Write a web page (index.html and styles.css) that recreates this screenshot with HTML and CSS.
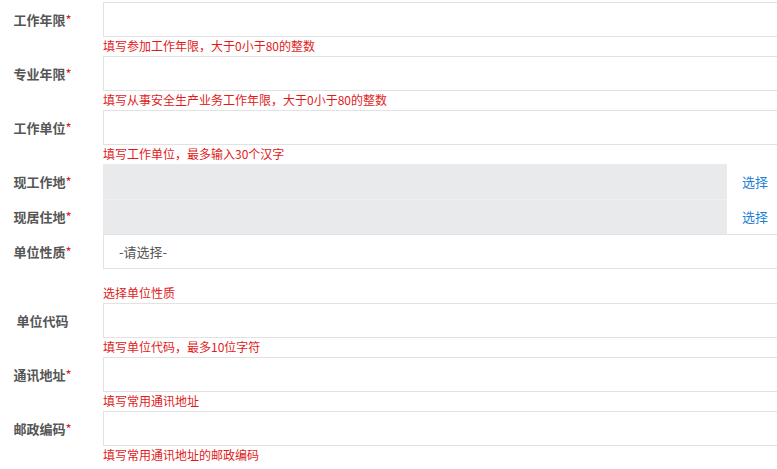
FILE: index.html
```html
<!DOCTYPE html>
<html lang="zh-CN">
<head>
<meta charset="utf-8">
<title>表单</title>
<link rel="stylesheet" href="styles.css">
</head>
<body>
<div class="form">
  <div class="row">
    <div class="label">工作年限<span class="req">*</span></div>
    <div class="field">
      <div class="input"></div>
      <div class="hint">填写参加工作年限，大于0小于80的整数</div>
    </div>
  </div>
  <div class="row">
    <div class="label">专业年限<span class="req">*</span></div>
    <div class="field">
      <div class="input"></div>
      <div class="hint">填写从事安全生产业务工作年限，大于0小于80的整数</div>
    </div>
  </div>
  <div class="row">
    <div class="label">工作单位<span class="req">*</span></div>
    <div class="field">
      <div class="input"></div>
      <div class="hint">填写工作单位，最多输入30个汉字</div>
    </div>
  </div>
  <div class="row">
    <div class="label">现工作地<span class="req">*</span></div>
    <div class="field pick">
      <div class="readonly"></div>
      <a class="choose">选择</a>
    </div>
  </div>
  <div class="row">
    <div class="label">现居住地<span class="req">*</span></div>
    <div class="field pick">
      <div class="readonly second"></div>
      <a class="choose">选择</a>
    </div>
  </div>
  <div class="row">
    <div class="label">单位性质<span class="req">*</span></div>
    <div class="field">
      <div class="input select">-请选择-</div>
      <div class="hint spaced">选择单位性质</div>
    </div>
  </div>
  <div class="row">
    <div class="label">单位代码</div>
    <div class="field">
      <div class="input"></div>
      <div class="hint">填写单位代码，最多10位字符</div>
    </div>
  </div>
  <div class="row">
    <div class="label">通讯地址<span class="req">*</span></div>
    <div class="field">
      <div class="input"></div>
      <div class="hint">填写常用通讯地址</div>
    </div>
  </div>
  <div class="row">
    <div class="label">邮政编码<span class="req">*</span></div>
    <div class="field">
      <div class="input"></div>
      <div class="hint">填写常用通讯地址的邮政编码</div>
    </div>
  </div>
</div>
</body>
</html>
```
FILE: styles.css
```css
html, body {
  margin: 0;
  padding: 0;
  background: #fff;
  overflow: hidden;
}
body {
  font-family: "Noto Sans CJK SC", "Noto Sans", sans-serif;
  font-size: 13px;
  color: #555;
  text-spacing-trim: space-all;
}
.form {
  width: 830px;
  padding-top: 2px;
}
.row {
  display: flex;
  align-items: flex-start;
}
.label {
  width: 85px;
  margin-right: 18px;
  height: 35px;
  line-height: 36px;
  text-align: center;
  font-weight: bold;
  color: #555;
  font-size: 13px;
}
.req {
  color: #e01b1b;
  font-weight: normal;
}
.field {
  flex: 1;
  display: flex;
  flex-direction: column;
}
.input {
  box-sizing: border-box;
  height: 35px;
  border: 1px solid #e2e2e2;
  background: #fff;
}
.select {
  padding-left: 15px;
  line-height: 33px;
  font-size: 13px;
  color: #555;
}
.hint {
  height: 19px;
  line-height: 18px;
  font-size: 12px;
  color: #e01b1b;
}
.hint.spaced {
  margin-top: 15px;
}
.pick {
  flex-direction: row;
  align-items: stretch;
}
.readonly {
  width: 624px;
  height: 35px;
  box-sizing: border-box;
  background: #e9eaec;
}
.readonly.second {
  border-top: 1px solid #eef0f1;
}
.choose {
  padding-left: 15px;
  line-height: 35px;
  font-size: 13px;
  color: #1c7fd6;
  cursor: pointer;
}
```
